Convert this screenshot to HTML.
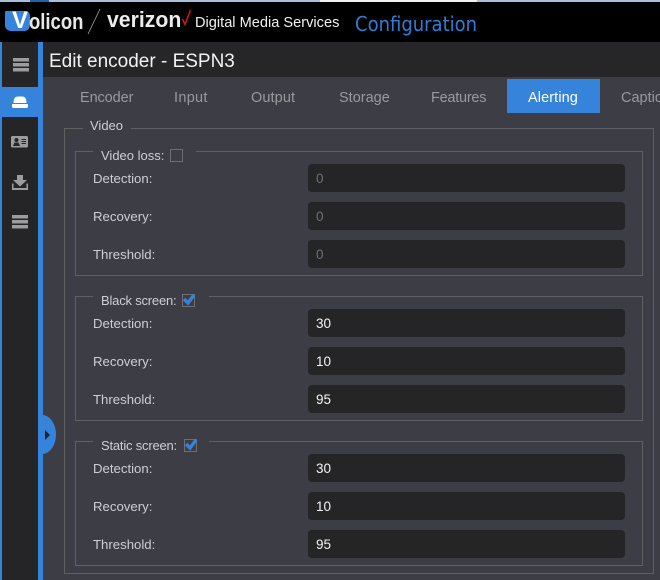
<!DOCTYPE html>
<html><head><meta charset="utf-8">
<style>
html,body{margin:0;padding:0;background:#3c3d45;}
#r{position:relative;width:660px;height:580px;overflow:hidden;background:#3c3d45;font-family:"Liberation Sans",sans-serif;}
#r div,#r span,#r svg{position:absolute;}
.t{white-space:nowrap;line-height:18px;}
.tab{top:88px;font-size:14.5px;color:#9a9a9c;white-space:nowrap;line-height:20px;}
.lb{left:93px;font-size:13.2px;color:#ccd0d6;white-space:nowrap;line-height:18px;}
.inp{left:308px;width:317px;height:28px;background:#252527;border-radius:4px;color:#f4f4f4;font-size:13.5px;line-height:30px;text-indent:8px;}
.dis{color:#6e7074;}
.fs{border:1px solid #5f6062;left:75px;width:566px;height:123px;box-sizing:content-box;}
.lg{background:#3c3d45;height:18px;}
</style></head><body>
<div id="r">
<div style="left:0;top:0;width:660px;height:2px;background:#a9c0da"></div>
<div style="left:30px;top:0;width:19px;height:2px;background:#1d63a8"></div>
<div style="left:320px;top:0;width:157px;height:2px;background:#f2f2f2"></div>
<div style="left:0;top:2px;width:660px;height:40px;background:#000"></div>

<!-- logo -->
<svg style="left:4px;top:10px" width="28" height="22" viewBox="0 0 28 22"><path d="M2 1H21C24 1 26 3 26 6V14C26 18 24 21 20 21H7C4 21 1 19 1 15V2C1 1.400 1.400 1 2 1Z" fill="#3683db"/></svg>
<div class="t" style="left:12px;top:7px;font-size:24px;line-height:28px;font-weight:bold;color:#fff;">V</div>
<div class="t" style="left:29px;top:9px;font-size:22px;line-height:26px;font-weight:bold;color:#e8e8e8;transform:scaleX(.84);transform-origin:left">olicon</div>
<svg style="left:86px;top:8px" width="18" height="28"><path d="M2 26L14 1" stroke="#a8a8a8" stroke-width=".8"/></svg>
<div class="t" style="left:107px;top:7px;font-size:22px;line-height:26px;font-weight:bold;color:#ececec;transform:scaleX(.965);transform-origin:left">verizon</div>
<svg style="left:180px;top:8px" width="14" height="18"><path d="M2.500 11L5 16.500L10.500 2" fill="none" stroke="#d01820" stroke-width="1.500"/></svg>
<div class="t" style="left:195px;top:14px;font-size:14.600px;color:#f2f2f2">Digital Media Services</div>
<div class="t" style="left:355px;top:11px;font-size:20px;line-height:26px;color:#2f7ed6;font-family:'DejaVu Sans',sans-serif;transform:scaleX(.9);transform-origin:left">Configuration</div>

<!-- sidebar -->
<div style="left:0;top:42px;width:2px;height:538px;background:#3683db"></div>
<div style="left:2px;top:42px;width:36px;height:538px;background:#252527"></div>
<div style="left:38px;top:42px;width:5px;height:538px;background:#3683db"></div>
<div style="left:0;top:87px;width:43px;height:30px;background:#3683db"></div>
<svg style="left:13px;top:58px" width="16" height="14"><rect x="0" y="0" width="16" height="3.500" fill="#9c9c9c"/><rect x="0" y="5" width="16" height="3.500" fill="#9c9c9c"/><rect x="0" y="10" width="16" height="3.500" fill="#9c9c9c"/></svg>
<svg style="left:12px;top:96px" width="16" height="13"><path d="M1.500 7C1.500 2.500 3 0.500 6 0.500H10C13 0.500 14.500 2.500 14.500 7Z" fill="#fff"/><path d="M0 8H16V10.500C16 11.500 15.500 12 14.500 12H1.500C.5 12 0 11.500 0 10.500Z" fill="#fff"/></svg>
<svg style="left:11px;top:136px" width="17" height="12"><rect x="0" y="0" width="17" height="11.500" rx="1.500" fill="#9c9c9c"/><circle cx="5.500" cy="4" r="2" fill="#252527"/><path d="M2 10L3.500 6.500H7.500L9 10Z" fill="#252527"/><rect x="10.500" y="3" width="4.500" height="1" fill="#252527"/><rect x="10.500" y="5" width="4.500" height="1" fill="#252527"/><rect x="10.500" y="7" width="4.500" height="1" fill="#252527"/></svg>
<svg style="left:12px;top:175px" width="16" height="15"><path d="M5 0H11V5H15L8 11.500L1 5H5Z" fill="#9c9c9c"/><path d="M0 8.500H1.500V13H14.500V8.500H16V15H0Z" fill="#9c9c9c"/></svg>
<svg style="left:12px;top:215px" width="16" height="14"><rect x="0" y="0" width="16" height="3.500" fill="#9c9c9c"/><rect x="0" y="5" width="16" height="3.500" fill="#9c9c9c"/><rect x="0" y="10" width="16" height="3.500" fill="#9c9c9c"/></svg>
<svg style="left:43px;top:415px" width="14" height="39"><path d="M0 0C8 1 13 10 13 19.500C13 29 8 38 0 39Z" fill="#3683db"/></svg>
<svg style="left:44px;top:429px" width="8" height="12"><path d="M1 1L6 6L1 11Z" fill="#252527"/></svg>

<!-- title -->
<div style="left:43px;top:42px;width:617px;height:35px;background:#262628"></div>
<div class="t" style="left:49px;top:51px;font-size:19px;line-height:22px;color:#f2f2f2">Edit encoder - ESPN3</div>

<!-- tabs -->
<div style="left:507px;top:79px;width:93px;height:34px;background:#3683db"></div>
<div class="tab" style="left:80px;letter-spacing:-.1px">Encoder</div>
<div class="tab" style="left:174px;letter-spacing:.3px">Input</div>
<div class="tab" style="left:251px;letter-spacing:.1px">Output</div>
<div class="tab" style="left:339px">Storage</div>
<div class="tab" style="left:431px;letter-spacing:-.25px">Features</div>
<div class="tab" style="left:528px;color:#fff;letter-spacing:.1px">Alerting</div>
<div class="tab" style="left:621px">Captions</div>

<!-- outer fieldset -->
<div style="left:64px;top:128px;width:596px;height:444px;border:1px solid #5f6062;border-right:0"></div>
<div class="lg" style="left:83px;top:117px;width:48px"></div>
<div class="t" style="left:90px;top:117px;font-size:13px;color:#ccd0d6">Video</div>
<div style="left:653px;top:128px;width:1px;height:446px;background:#5f6062"></div>
<div style="left:654px;top:128px;width:6px;height:446px;background:#3c3d45"></div>

<!-- group 1 -->
<div class="fs" style="top:151px"></div>
<div class="lg" style="left:93px;top:147px;width:103px"></div>
<div class="t" style="left:101px;top:147px;font-size:13px;color:#ccd0d6">Video loss:</div>
<div style="left:170px;top:149px;width:11px;height:11px;border:1px solid #6e6f72"></div>
<div class="lb" style="top:170px">Detection:</div>
<div class="inp dis" style="top:164px">0</div>
<div class="lb" style="top:208px">Recovery:</div>
<div class="inp dis" style="top:202px">0</div>
<div class="lb" style="top:246px">Threshold:</div>
<div class="inp dis" style="top:240px">0</div>

<!-- group 2 -->
<div class="fs" style="top:296px"></div>
<div class="lg" style="left:93px;top:292px;width:116px"></div>
<div class="t" style="left:101px;top:292px;font-size:13px;letter-spacing:-.2px;color:#ccd0d6">Black screen:</div>
<div style="left:182px;top:294px;width:11px;height:11px;border:1px solid #6e6f72"></div>
<svg style="left:181px;top:292px" width="16" height="14"><path d="M3 7L7 11L13 3" fill="none" stroke="#3683db" stroke-width="3.400"/></svg>
<div class="lb" style="top:315px">Detection:</div>
<div class="inp" style="top:309px">30</div>
<div class="lb" style="top:353px">Recovery:</div>
<div class="inp" style="top:347px">10</div>
<div class="lb" style="top:391px">Threshold:</div>
<div class="inp" style="top:385px">95</div>

<!-- group 3 -->
<div class="fs" style="top:441px"></div>
<div class="lg" style="left:93px;top:437px;width:116px"></div>
<div class="t" style="left:101px;top:437px;font-size:13px;letter-spacing:-.2px;color:#ccd0d6">Static screen:</div>
<div style="left:184px;top:439px;width:11px;height:11px;border:1px solid #6e6f72"></div>
<svg style="left:183px;top:437px" width="16" height="14"><path d="M3 7L7 11L13 3" fill="none" stroke="#3683db" stroke-width="3.400"/></svg>
<div class="lb" style="top:460px">Detection:</div>
<div class="inp" style="top:454px">30</div>
<div class="lb" style="top:498px">Recovery:</div>
<div class="inp" style="top:492px">10</div>
<div class="lb" style="top:536px">Threshold:</div>
<div class="inp" style="top:530px">95</div>
</div>
</body></html>
